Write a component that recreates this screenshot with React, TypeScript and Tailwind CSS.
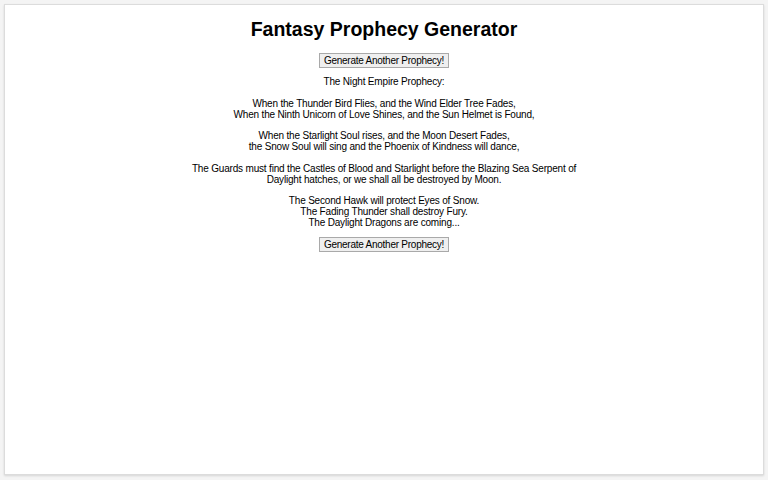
import React from 'react';

const lines = [
  ['The Night Empire Prophecy:'],
  [
    'When the Thunder Bird Flies, and the Wind Elder Tree Fades,',
    'When the Ninth Unicorn of Love Shines, and the Sun Helmet is Found,',
  ],
  [
    'When the Starlight Soul rises, and the Moon Desert Fades,',
    'the Snow Soul will sing and the Phoenix of Kindness will dance,',
  ],
  [
    'The Guards must find the Castles of Blood and Starlight before the Blazing Sea Serpent of Daylight hatches, or we shall all be destroyed by Moon.',
  ],
  [
    'The Second Hawk will protect Eyes of Snow.',
    'The Fading Thunder shall destroy Fury.',
    'The Daylight Dragons are coming...',
  ],
];

const GenerateButton: React.FC = () => (
  <button className="h-[15px] px-[4px] border border-[#a9a9a9] bg-[#efefef] text-[10px] tracking-[-0.25px] leading-[13px] text-black">
    Generate Another Prophecy!
  </button>
);

const App: React.FC = () => {
  return (
    <div
      className="min-h-[480px] bg-[#f4f4f4] p-[4px]"
      style={{ fontFamily: '"Liberation Sans", Arial, sans-serif' }}
    >
      <div className="h-[471px] bg-white border border-[#dcdcdc] shadow-[0_1px_2px_rgba(0,0,0,0.12)] flex flex-col items-center pt-[12px]">
        <h1 className="text-[19.5px] leading-[24px] font-bold text-black">Fantasy Prophecy Generator</h1>

        <div className="mt-[6px]">
          <GenerateButton />
        </div>

        <div className="mt-[5px] max-w-[388px] text-center text-[10px] tracking-[-0.18px] leading-[11px] text-black flex flex-col gap-[10.5px]">
          {lines.map((para, i) => (
            <p key={i}>
              {para.map((l, j) => (
                <React.Fragment key={j}>
                  {l}
                  {j < para.length - 1 && <br />}
                </React.Fragment>
              ))}
            </p>
          ))}
        </div>

        <div className="mt-[3px]">
          <GenerateButton />
        </div>
      </div>
    </div>
  );
};

export default App;
